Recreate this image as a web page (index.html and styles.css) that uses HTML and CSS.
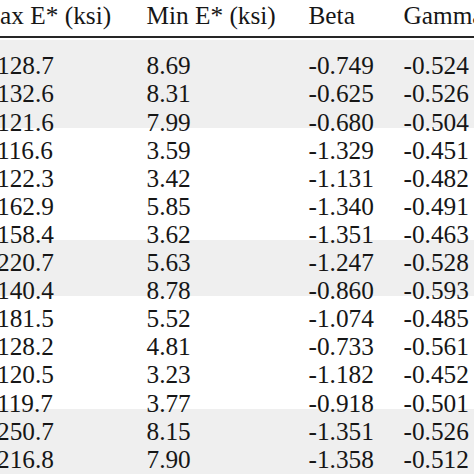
FILE: index.html
```html
<!DOCTYPE html>
<html>
<head>
<meta charset="utf-8">
<link rel="stylesheet" href="styles.css">
</head>
<body>
<div class="table">
  <div class="row head">
    <div class="c1">Max E* (ksi)</div>
    <div>Min E* (ksi)</div>
    <div>Beta</div>
    <div>Gamma</div>
  </div>
  <div class="group shaded first">
    <div class="row"><div>128.7</div><div>8.69</div><div>-0.749</div><div>-0.524</div></div>
    <div class="row"><div>132.6</div><div>8.31</div><div>-0.625</div><div>-0.526</div></div>
    <div class="row"><div>121.6</div><div>7.99</div><div>-0.680</div><div>-0.504</div></div>
  </div>
  <div class="group">
    <div class="row"><div>116.6</div><div>3.59</div><div>-1.329</div><div>-0.451</div></div>
    <div class="row"><div>122.3</div><div>3.42</div><div>-1.131</div><div>-0.482</div></div>
    <div class="row"><div>162.9</div><div>5.85</div><div>-1.340</div><div>-0.491</div></div>
    <div class="row"><div>158.4</div><div>3.62</div><div>-1.351</div><div>-0.463</div></div>
  </div>
  <div class="group shaded">
    <div class="row"><div>220.7</div><div>5.63</div><div>-1.247</div><div>-0.528</div></div>
    <div class="row"><div>140.4</div><div>8.78</div><div>-0.860</div><div>-0.593</div></div>
  </div>
  <div class="group">
    <div class="row"><div>181.5</div><div>5.52</div><div>-1.074</div><div>-0.485</div></div>
    <div class="row"><div>128.2</div><div>4.81</div><div>-0.733</div><div>-0.561</div></div>
    <div class="row"><div>120.5</div><div>3.23</div><div>-1.182</div><div>-0.452</div></div>
    <div class="row"><div>119.7</div><div>3.77</div><div>-0.918</div><div>-0.501</div></div>
  </div>
  <div class="group shaded last">
    <div class="row"><div>250.7</div><div>8.15</div><div>-1.351</div><div>-0.526</div></div>
    <div class="row"><div>216.8</div><div>7.90</div><div>-1.358</div><div>-0.512</div></div>
  </div>
</div>
</body>
</html>
```

FILE: styles.css
```css
html, body {
  margin: 0;
  padding: 0;
  overflow: hidden;
  background: #ffffff;
}
.table {
  font-family: "Liberation Serif", "Times New Roman", serif;
  font-size: 25.3px;
  color: #161616;
  width: 474px;
  overflow: hidden;
}
.row {
  display: grid;
  grid-template-columns: 149.5px 162px 95px 1fr;
  margin-left: -3px;
  height: 28.1px;
  box-sizing: border-box;
  padding-top: 16px;
  line-height: 12.1px;
  white-space: nowrap;
}
.row.head {
  height: auto;
  padding-top: 0;
  line-height: 30px;
  padding-bottom: 6px;
  border-bottom: 2px solid #262626;
  margin-bottom: 2px;
  width: 500px;
}
.head .c1 {
  text-indent: -19.4px;
}
.group.shaded {
  background: #efefef;
}
.group.first {
  padding-top: 3.4px;
}
.group.last {
  padding-bottom: 12px;
}
```
